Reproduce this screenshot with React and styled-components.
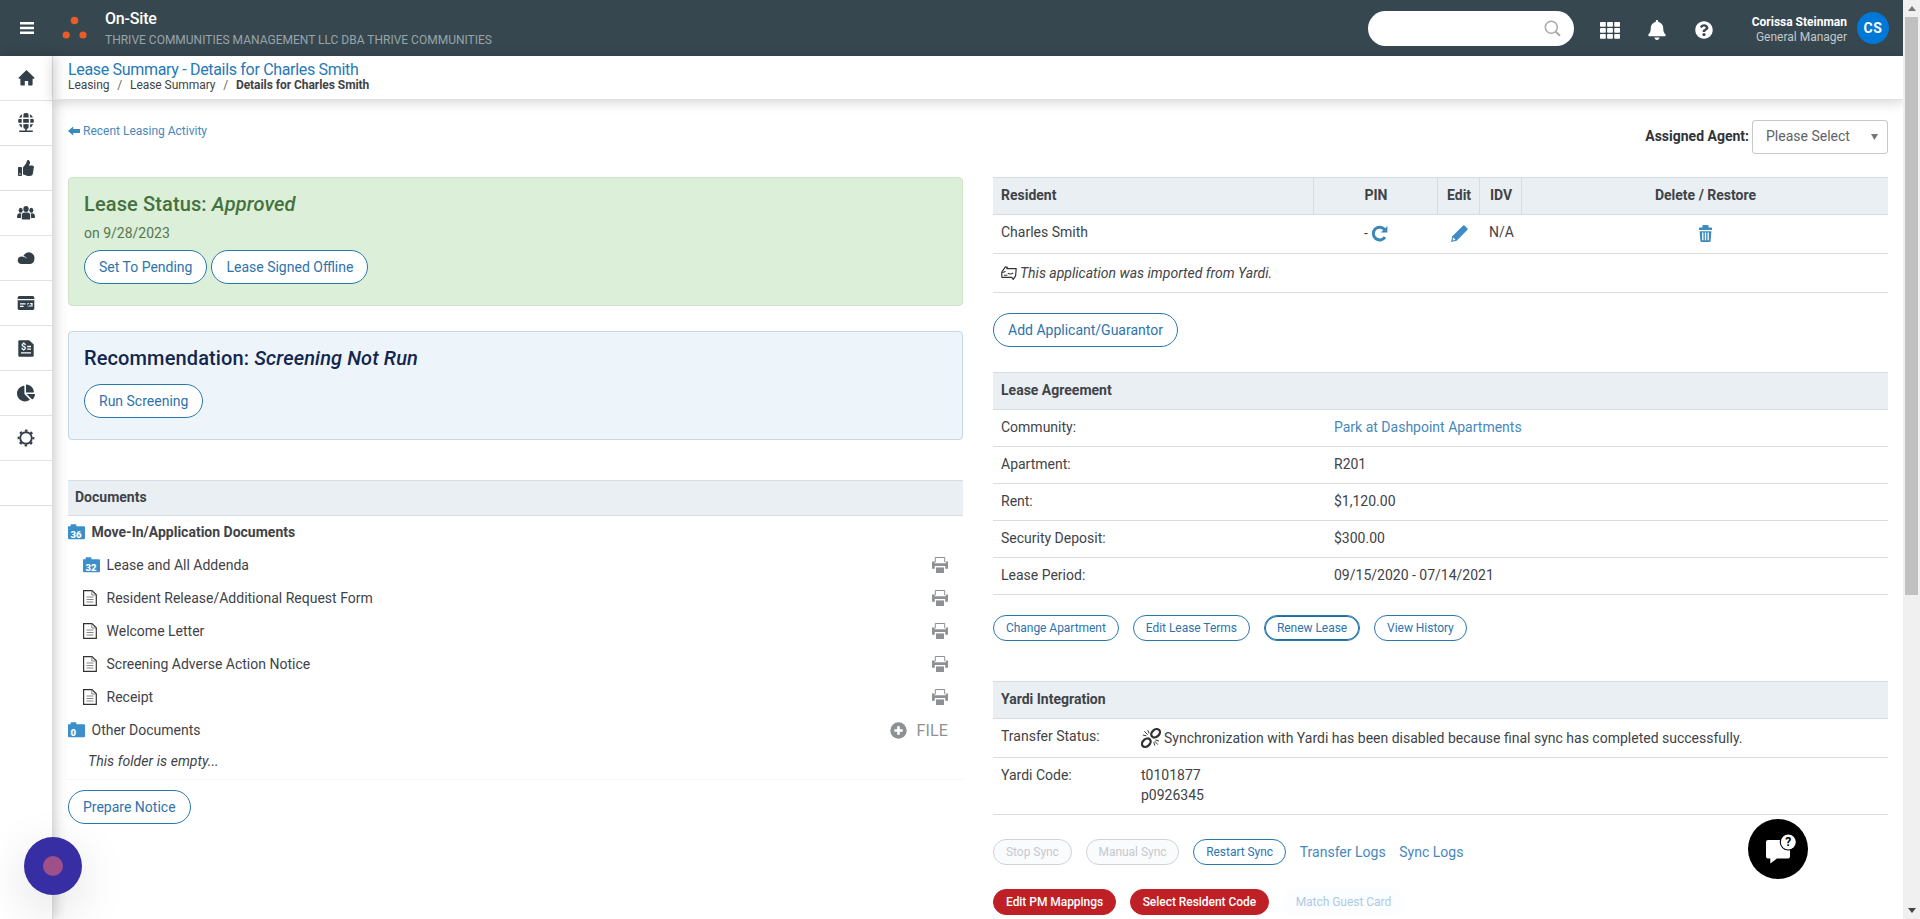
import React from "react";
import styled, { createGlobalStyle, css } from "styled-components";
import { FaThumbsUp, FaChartPie, FaBell, FaQuestionCircle } from "react-icons/fa";

const GlobalStyle = createGlobalStyle`
  *, *::before, *::after { box-sizing: border-box; }
  html, body { margin: 0; height: 100%; overflow: hidden; background: #fff; }
  body { font: 14px/20px Roboto, "Liberation Sans", sans-serif; color: #3f4347; }
  svg { display: block; flex: none; }
`;

const Page = styled.div`
  display: flex;
  height: 919px;
  width: 1920px;
  overflow: hidden;
`;
const AppColumn = styled.div`
  flex: 1;
  min-width: 0;
  display: flex;
  flex-direction: column;
`;

/* Header */
const Header = styled.header`
  height: 56px;
  flex: none;
  background: #37474f;
  color: #fff;
  display: flex;
  align-items: center;
  padding: 0 14px 0 20px;
`;
const Brand = styled.div`
  margin-left: 14px;
  padding-top: 2px;
  flex: 1;
`;
const BrandName = styled.div`
  font-size: 16px;
  line-height: 21px;
  font-weight: 500;
  letter-spacing: -0.2px;
`;
const BrandOrg = styled.div`
  font-size: 12px;
  line-height: 20px;
  padding-top: 1px;
  color: #98a4aa;
`;
const LogoSlot = styled.div`
  margin-left: 28px;
`;
const SearchBox = styled.div`
  width: 206px;
  height: 35px;
  border-radius: 18px;
  background: #fff;
  display: flex;
  align-items: center;
  justify-content: flex-end;
  padding-right: 13px;
`;
const HeaderIcons = styled.div`
  display: flex;
  align-items: center;
  margin: 4px 0 0 26px;
  width: 113px;
`;
const IconSlot = styled.div`
  margin-left: ${(p) => p.$left || 0}px;
`;
const User = styled.div`
  width: 134px;
  text-align: right;
  font-size: 12px;
  line-height: 15px;
  padding-top: 3px;
`;
const UserName = styled.div`
  font-weight: 700;
`;
const UserRole = styled.div`
  color: #c3c9cc;
`;
const Avatar = styled.div`
  width: 32px;
  height: 32px;
  margin-left: 10px;
  border-radius: 50%;
  background: #0078d7;
  font-weight: 700;
  letter-spacing: 0.6px;
  display: flex;
  align-items: center;
  justify-content: center;
`;

/* Frame */
const Body = styled.div`
  flex: 1;
  display: flex;
  min-height: 0;
`;
const Sidebar = styled.nav`
  width: 53px;
  flex: none;
  border-right: 1px solid #dcdcdc;
  box-shadow: 2px 0 12px rgba(0, 0, 0, 0.2);
  background: #fff;
  color: #333f48;
`;
const NavItem = styled.div`
  height: 45px;
  border-bottom: 1px solid #e2e2e2;
  display: flex;
  align-items: center;
  justify-content: center;
`;
const Main = styled.main`
  flex: 1;
  min-width: 0;
  display: flex;
  flex-direction: column;
`;
const TitleBar = styled.div`
  height: 44px;
  flex: none;
  padding: 4px 15px 0;
  border-bottom: 1px solid #e2e2e2;
  box-shadow: 0 2px 12px rgba(0, 0, 0, 0.18);
`;
const PageTitle = styled.div`
  font-size: 16px;
  line-height: 19px;
  letter-spacing: -0.32px;
  color: #2579b8;
`;
const Crumbs = styled.div`
  display: flex;
  gap: 7.8px;
  font-size: 12px;
  line-height: 12px;
  letter-spacing: -0.05px;
`;
const Crumb = styled.span`
  font-weight: ${(p) => (p.$current ? 700 : 400)};
`;
const CrumbSlash = styled.span`
  color: #666;
`;

const Toolbar = styled.div`
  height: 77px;
  flex: none;
  padding: 20px 15px 0;
  display: flex;
  justify-content: space-between;
  align-items: flex-start;
`;
const BackLink = styled.a`
  display: flex;
  align-items: center;
  gap: 3px;
  font-size: 12px;
  line-height: 22px;
  color: #4788bc;
`;
const AgentPicker = styled.div`
  display: flex;
  gap: 3px;
  font-weight: 700;
  line-height: 32px;
  color: #30343a;
`;
const Select = styled.div`
  width: 136px;
  height: 34px;
  border: 1px solid #c6c8ca;
  border-radius: 3px;
  padding: 0 9px 0 13px;
  font-weight: 400;
  line-height: 30px;
  color: #606468;
  display: flex;
  justify-content: space-between;
`;
const SelectCaret = styled.div`
  padding-top: 13px;
`;
const Columns = styled.div`
  display: grid;
  grid-template-columns: 895px 895px;
  gap: 30px;
  padding: 0 15px;
`;

/* Buttons */
const Button = styled.button`
  height: 34px;
  font: 400 14px/20px Roboto, "Liberation Sans", sans-serif;
  padding: 0 14px;
  border: 1px solid #2878ae;
  border-radius: 17px;
  background: #fff;
  color: #2e73ad;
  white-space: nowrap;
  ${(p) =>
    p.$small &&
    css`
      height: 26px;
      font-size: 12px;
      padding: 0 12px;
      letter-spacing: -0.04px;
    `}
  ${(p) => p.$focus && css`box-shadow: inset 0 0 0 1px #1d6ea8;`}
  ${(p) =>
    p.$disabled &&
    css`
      border-color: #d0d3d6;
      background: #fafbfd;
      color: #c5c9ce;
    `}
  ${(p) =>
    p.$danger &&
    css`
      border-color: #bf2026;
      background: #bf2026;
      color: #fff;
      font-weight: 500;
    `}
  ${(p) =>
    p.$ghost &&
    css`
      border-color: #fcfdff;
      background: #fcfdff;
      color: #abcbe5;
    `}
`;
const ButtonRow = styled.div`
  display: flex;
  align-items: center;
  gap: ${(p) => p.$gap || 4}px;
  margin-top: ${(p) => p.$top || 0}px;
`;
const Link = styled.a`
  color: #4788bc;
`;

/* Alerts */
const Alert = styled.section`
  border: 1px solid ${(p) => (p.$green ? "#cfe5c8" : "#c6d8e6")};
  background: ${(p) => (p.$green ? "#dcefd8" : "#edf5fb")};
  color: ${(p) => (p.$green ? "#45713f" : "#14264f")};
  border-radius: 4px;
  height: ${(p) => p.$h}px;
  margin-bottom: ${(p) => p.$gap}px;
  padding: 14px 15px 0;
`;
const AlertTitle = styled.h4`
  margin: 0;
  font-size: 20px;
  line-height: 24px;
  font-weight: 500;
  letter-spacing: 0.12px;
`;
const AlertNote = styled.div`
  margin-top: 7px;
  line-height: 20px;
  color: #57764f;
`;

/* Documents */
const DocHeader = styled.div`
  height: 36px;
  border: solid #d3dee6;
  border-width: 1px 0;
  background: #eaeff4;
  padding: 6px 7px;
  font-weight: 700;
`;
const DocRow = styled.div`
  height: 33px;
  display: flex;
  align-items: center;
  padding: 0 15px 1px ${(p) => (p.$nested ? 15 : 0)}px;
  font-weight: ${(p) => (p.$bold ? 700 : 400)};
`;
const DocIcon = styled.div`
  width: 23.5px;
`;
const DocName = styled.div`
  flex: 1;
`;
const AddFile = styled.div`
  display: flex;
  align-items: center;
  gap: 9px;
  font-size: 16px;
  letter-spacing: 0.15px;
  padding-top: 1px;
  color: #8e9193;
`;
const FolderEmpty = styled.div`
  height: 33px;
  padding: 4px 20px 0;
  font-style: italic;
  letter-spacing: 0.06px;
  border-bottom: 1px solid #f5f5f5;
`;

/* Tables */
const ResidentTable = styled.table`
  width: 895px;
  border-collapse: separate;
  border-spacing: 0;
  table-layout: fixed;
`;
const Th = styled.th`
  height: 38px;
  padding: 0 8px 3px;
  border: solid #d5dde2;
  border-width: 1px 0;
  background: #eaeff4;
  font-weight: 700;
  text-align: ${(p) => (p.$left ? "left" : "center")};
  & + & { border-left: 1px solid #d5dde2; padding-left: 9px; }
`;
const Td = styled.td`
  height: 39px;
  padding: 0 8px ${(p) => p.$pb ?? 5}px;
  border-bottom: 1px solid #dadddf;
  text-align: ${(p) => (p.$left ? "left" : "center")};
  font-style: ${(p) => (p.$italic ? "italic" : "normal")};
  & + & { padding-left: 10px; }
`;
const Inline = styled.div`
  display: flex;
  align-items: center;
  justify-content: ${(p) => (p.$left ? "flex-start" : "center")};
  gap: ${(p) => p.$gap ?? 3}px;
  padding-top: ${(p) => p.$pt || 0}px;
`;
const Panel = styled.section`
  margin-top: ${(p) => p.$top}px;
`;
const PanelHeader = styled.div`
  height: 38px;
  border: solid #d5dde2;
  border-width: 1px 0;
  background: #eaeff4;
  font-weight: 700;
  padding: 7px 8px;
`;
const Field = styled.div`
  display: grid;
  grid-template-columns: ${(p) => p.$label || 333}px 1fr;
  min-height: ${(p) => p.$min || 37}px;
  padding: 7px 8px 9px;
  border-bottom: 1px solid #dadddf;
`;

/* Overlays */
const RecordBubble = styled.div`
  position: absolute;
  left: 24px;
  top: 837px;
  width: 58px;
  height: 58px;
  border-radius: 50%;
  background: #372ea3;
  box-shadow: 0 14px 50px rgba(0, 0, 0, 0.13);
  display: flex;
  align-items: center;
  justify-content: center;
`;
const RecordDot = styled.div`
  width: 20px;
  height: 20px;
  border-radius: 50%;
  background: #9d5188;
`;
const ChatBubble = styled.div`
  position: absolute;
  left: 1748px;
  top: 819px;
  width: 60px;
  height: 60px;
  border-radius: 50%;
  background: #000;
`;

/* Scrollbar */
const ScrollTrack = styled.div`
  width: 17px;
  flex: none;
  background: #f0f0f0;
  display: flex;
  flex-direction: column;
  align-items: center;
  justify-content: space-between;
`;
const ScrollThumb = styled.div`
  width: 13px;
  height: 578px;
  background: #c0c0c0;
`;
const ScrollArrow = styled.div`
  height: 17px;
  display: flex;
  align-items: center;
`;
const Grow = styled.div`
  flex: 1;
`;

/* Icons */
const HomeIcon = () => (
  <svg width="17" height="16" viewBox="0 0 17 16" fill="currentColor">
    <path d="M8.5 0 L16.7 8 L15.8 8.8 H14.6 V14.6 Q14.6 15.6 13.6 15.6 H10.2 V11 H6.8 V15.6 H3.4 Q2.4 15.6 2.4 14.6 V8.8 H1.2 L.3 8 Z" />
  </svg>
);
const GlobeIcon = () => (
  <svg width="18" height="20" viewBox="0 0 18 20">
    <circle cx="9" cy="8" r="7.9" fill="currentColor" />
    <path d="M0 5.3H18M0 10.4H18M6 0Q4.8 8 6 16.5M12 0Q13.2 8 12 16.5" stroke="#fff" strokeWidth="1.5" fill="none" />
    <path d="M9 11v7M2.2 18.2h13.6" stroke="currentColor" strokeWidth="1.6" />
  </svg>
);
const PeopleIcon = () => (
  <svg width="18" height="14" viewBox="0 0 18 14" fill="currentColor">
    <ellipse cx="9" cy="3" rx="2.7" ry="3" />
    <path d="M4.8 13.4V9.6Q4.8 6.6 7.6 6.5H10.4Q13.2 6.6 13.2 9.6V13.4Z" />
    <ellipse cx="3.7" cy="4.3" rx="2" ry="2.5" />
    <ellipse cx="14.3" cy="4.3" rx="2" ry="2.5" />
    <path d="M.1 12V9.8Q.2 7.3 2.4 7.2L4.4 7.4Q3.8 8.4 3.9 12ZM17.9 12V9.8Q17.8 7.3 15.6 7.2L13.6 7.4Q14.2 8.4 14.1 12Z" />
  </svg>
);
const CloudIcon = () => (
  <svg width="18" height="12" viewBox="0 0 18 12" fill="currentColor">
    <circle cx="11.8" cy="6" r="5.7" />
    <circle cx="4.6" cy="8.2" r="3.8" />
    <path d="M4.6 12V7L12 1Q17 3 17.2 8Q16.4 12 12.6 12Z" />
    <path d="M6 4.4Q8.2 4.5 9.5 6" stroke="#fff" strokeWidth=".8" fill="none" />
  </svg>
);
const CardIcon = () => (
  <svg width="18" height="14" viewBox="0 0 18 14">
    <rect x=".7" y="0" width="16.6" height="14" rx="1.6" fill="currentColor" />
    <path d="M.7 3.7H17.3M3 7.8H8.5M3 10.3H6.6M11 7.6H15V10H11Z" stroke="#fff" strokeWidth="1.2" fill="none" />
    <path d="M10.5 10.2l2.4-3" stroke="currentColor" strokeWidth="1.4" />
  </svg>
);
const InvoiceIcon = () => (
  <svg width="16" height="17" viewBox="0 0 16 17">
    <path d="M1.6.3H11.2L15.7 4.6V15.4Q15.7 16.7 14.4 16.7H1.6Q.3 16.7.3 15.4V1.6Q.3.3 1.6.3Z" fill="currentColor" />
    <path d="M9.2 6.5H13M9.2 9.2H13M3 12.9H13" stroke="#fff" strokeWidth="1.3" />
    <text x="3" y="10.2" fontSize="9" fontWeight="700" fill="#fff">$</text>
  </svg>
);
const GearIcon = () => (
  <svg width="18" height="18" viewBox="0 0 18 18" stroke="currentColor" fill="none">
    <circle cx="9" cy="9" r="5.8" strokeWidth="1.9" />
    <circle cx="9" cy="9" r="7.4" strokeWidth="2" strokeDasharray="2.6 3.212" strokeDashoffset="1.3" />
  </svg>
);
const MenuIcon = () => (
  <svg width="14" height="12" viewBox="0 0 14 12" fill="#fff">
    <path d="M0 0h14v2.6H0zM0 4.8h14v2.5H0zM0 9.4h14V12H0z" />
  </svg>
);
const Logo = () => (
  <svg width="29" height="26" viewBox="0 0 29 26" fill="#e85c2c">
    <circle cx="12.5" cy="5.5" r="3.8" />
    <circle cx="4.2" cy="20" r="3.6" />
    <circle cx="21" cy="20" r="3.6" />
  </svg>
);
const SearchIcon = () => (
  <svg width="17" height="17" viewBox="0 0 17 17" fill="none" stroke="#aaa" strokeWidth="1.5">
    <circle cx="7.3" cy="7.3" r="6" />
    <path d="M11.7 11.7l4.3 4" strokeWidth="2" />
  </svg>
);
const GridIcon = () => (
  <svg width="20" height="17" viewBox="0 0 20 17" fill="#fff">
    {[0, 6, 12].map((y) =>
      [0, 7.1, 14.2].map((x) => <rect key={`${x}-${y}`} x={x} y={y} width="5.8" height="4.8" rx=".8" />)
    )}
  </svg>
);
const ArrowLeft = () => (
  <svg width="12" height="10" viewBox="0 0 12 10" fill="#3a89bb">
    <path d="M0 5L5.2.5V3H12V7H5.2V9.5Z" />
  </svg>
);
const FolderIcon = ({ count }) => (
  <svg width="17" height="16" viewBox="0 0 17 16">
    <path d="M0 2.2H2.6V1Q2.6.3 3.4.3H7.6Q8.4.3 8.4 1V2.2H16Q17 2.2 17 3.2V14.3Q17 15.3 16 15.3H1Q0 15.3 0 14.3Z" fill="#3c8fca" />
    <text x="2.6" y="14" fontSize="9.5" fontWeight="900" fill="#fff">{count}</text>
  </svg>
);
const DocFileIcon = () => (
  <svg width="14" height="16" viewBox="0 0 14 16" fill="none" stroke="#333" strokeWidth="1.2">
    <path d="M.6.6H9L13.3 4.8V15.4H.6Z" />
    <path d="M8.8.6V5H13.2M3.5 7H10.5M3.5 9.5H10.5M3.5 12H10.5" strokeWidth=".9" stroke="#777" />
  </svg>
);
const PrinterIcon = () => (
  <svg width="16" height="16" viewBox="0 0 16 16" fill="#8e9193">
    <path d="M3.3 5.2V.5H12.7V5.2" fill="#fff" stroke="#8e9193" />
    <path d="M0 5.6H2.2V6.2H13.8V4.5H16V11.8H13.2V9H2.8V11.8H0Z" />
    <path d="M4 10.4H12V16H4Z" />
    <path d="M0 4.5H2.8V6H0Z" />
  </svg>
);
const PlusCircle = () => (
  <svg width="17" height="17" viewBox="0 0 17 17">
    <circle cx="8.5" cy="8.5" r="8.2" fill="#8e9193" />
    <path d="M8.5 4.3V12.7M4.3 8.5H12.7" stroke="#fff" strokeWidth="2.6" />
  </svg>
);
const RefreshIcon = () => (
  <svg width="17" height="17" viewBox="0 0 17 17">
    <path d="M13.6 4.4A6.4 6.4 0 1 0 14 12.2" fill="none" stroke="#3c87ba" strokeWidth="3" />
    <path d="M16.4 1V7.6H9.8Z" fill="#3c87ba" />
  </svg>
);
const PencilIcon = () => (
  <svg width="17" height="17" viewBox="0 0 17 17" fill="#3f8bc9">
    <path d="M0 17L1.3 11.3L12.2.5Q13 0 13.6.5L16.5 3.4Q17 4 16.5 4.7L5.7 15.7Z" />
    <path d="M1.5 15.5L2.3 12.5L4.5 14.7Z" fill="#fff" />
  </svg>
);
const TrashIcon = () => (
  <svg width="13" height="17" viewBox="0 0 13 17" fill="#3f8bbf">
    <path d="M0 5V3.2Q0 2.5.8 2.5H3.4V1Q3.4 0 4.4 0H8.6Q9.6 0 9.6 1V2.5H12.2Q13 2.5 13 3.2V5ZM.6 6.2H12.4L11.6 16Q11.5 17 10.6 17H2.4Q1.5 17 1.4 16Z" />
    <path d="M3.8 7.5V15.2M6.5 7.5V15.2M9.2 7.5V15.2" stroke="#fff" strokeWidth="1.3" />
  </svg>
);
const ImportedIcon = () => (
  <svg width="16" height="14" viewBox="0 0 16 14" fill="none" stroke="#333" strokeWidth="1.2" strokeLinejoin="round">
    <path d="M.8 11.6V6L4.4.9L6.3 1.4L5.8 2.7H15.2L14.6 9.8L12.2 13.3L10.8 11.4H.8" />
    <path d="M1.2 6.6L4.6 5.4M3 9.2H6.4M6.8 7.2Q9.6 8.8 12.2 7" strokeWidth="1.1" />
  </svg>
);
const UnlinkIcon = () => (
  <svg width="20" height="20" viewBox="0 0 20 20" fill="none" stroke="#303234" strokeWidth="2.3">
    <ellipse cx="14.6" cy="5.3" rx="4.8" ry="3.6" transform="rotate(-42 14.6 5.3)" />
    <ellipse cx="5.3" cy="14.7" rx="4.8" ry="3.6" transform="rotate(-42 5.3 14.7)" />
    <path d="M6.8 2.2L8.2 5.4M3.4 3.2L6.6 6.6M1.8 7L5.4 7.8M12.8 14.2L13.8 17.6M13.8 13.2L16.8 16.6M14.4 12L18 13" strokeWidth="1" />
  </svg>
);
const Caret = ({ up, w = 8, h = 5, color = "#777" }) => (
  <svg width={w} height={h} viewBox="0 0 8 5" fill={color} preserveAspectRatio="none">
    <path d={up ? "M0 5L4 0L8 5Z" : "M0 0H8L4 5Z"} />
  </svg>
);
const ChatIcon = () => (
  <svg width="60" height="60" viewBox="0 0 60 60">
    <path d="M20 21H40Q42 21 42 23V37.5Q42 39.5 40 39.5H29L22.3 44.6V39.5H20Q18 39.5 18 37.5V23Q18 21 20 21Z" fill="#fff" />
    <circle cx="40.3" cy="23" r="8.6" fill="#000" />
    <circle cx="40.3" cy="23" r="7.5" fill="#fff" />
    <text x="40.3" y="27.2" textAnchor="middle" fontSize="12" fontWeight="700" fill="#000">?</text>
  </svg>
);

const navIcons = [
  <HomeIcon />, <GlobeIcon />, <FaThumbsUp size={16} />, <PeopleIcon />, <CloudIcon />,
  <CardIcon />, <InvoiceIcon />, <FaChartPie size={18} />, <GearIcon />, null,
];
const documents = ["Resident Release/Additional Request Form", "Welcome Letter", "Screening Adverse Action Notice", "Receipt"];
const leaseFields = [
  ["Community:", <Link>Park at Dashpoint Apartments</Link>],
  ["Apartment:", "R201"],
  ["Rent:", "$1,120.00"],
  ["Security Deposit:", "$300.00"],
  ["Lease Period:", "09/15/2020 - 07/14/2021"],
];

export default function App() {
  return (
    <Page>
      <GlobalStyle />
      <AppColumn>
        <Header>
          <MenuIcon />
          <LogoSlot><Logo /></LogoSlot>
          <Brand>
            <BrandName>On-Site</BrandName>
            <BrandOrg>THRIVE COMMUNITIES MANAGEMENT LLC DBA THRIVE COMMUNITIES</BrandOrg>
          </Brand>
          <SearchBox><SearchIcon /></SearchBox>
          <HeaderIcons>
            <GridIcon />
            <IconSlot $left={27}><FaBell size={20} /></IconSlot>
            <IconSlot $left={28}><FaQuestionCircle size={18} /></IconSlot>
          </HeaderIcons>
          <User>
            <UserName>Corissa Steinman</UserName>
            <UserRole>General Manager</UserRole>
          </User>
          <Avatar>CS</Avatar>
        </Header>
        <Body>
          <Sidebar>
            {navIcons.map((icon, i) => <NavItem key={i}>{icon}</NavItem>)}
          </Sidebar>
          <Main>
            <TitleBar>
              <PageTitle>Lease Summary - Details for Charles Smith</PageTitle>
              <Crumbs>
                <Crumb>Leasing</Crumb><CrumbSlash>/</CrumbSlash>
                <Crumb>Lease Summary</Crumb><CrumbSlash>/</CrumbSlash>
                <Crumb $current>Details for Charles Smith</Crumb>
              </Crumbs>
            </TitleBar>
            <Toolbar>
              <BackLink><ArrowLeft />Recent Leasing Activity</BackLink>
              <AgentPicker>
                Assigned Agent:
                <Select>Please Select<SelectCaret><Caret w={7} h={6} /></SelectCaret></Select>
              </AgentPicker>
            </Toolbar>
            <Columns>
              <div>
                <Alert $green $h={129} $gap={25}>
                  <AlertTitle>Lease Status: <em>Approved</em></AlertTitle>
                  <AlertNote>on 9/28/2023</AlertNote>
                  <ButtonRow $top={7}>
                    <Button>Set To Pending</Button>
                    <Button>Lease Signed Offline</Button>
                  </ButtonRow>
                </Alert>
                <Alert $h={109} $gap={40}>
                  <AlertTitle>Recommendation: <em>Screening Not Run</em></AlertTitle>
                  <ButtonRow $top={14}><Button>Run Screening</Button></ButtonRow>
                </Alert>
                <DocHeader>Documents</DocHeader>
                <DocRow $bold><DocIcon><FolderIcon count="36" /></DocIcon><DocName>Move-In/Application Documents</DocName></DocRow>
                <DocRow $nested><DocIcon><FolderIcon count="32" /></DocIcon><DocName>Lease and All Addenda</DocName><PrinterIcon /></DocRow>
                {documents.map((name) => (
                  <DocRow $nested key={name}>
                    <DocIcon><DocFileIcon /></DocIcon><DocName>{name}</DocName><PrinterIcon />
                  </DocRow>
                ))}
                <DocRow>
                  <DocIcon><FolderIcon count="0" /></DocIcon><DocName>Other Documents</DocName>
                  <AddFile><PlusCircle />FILE</AddFile>
                </DocRow>
                <FolderEmpty>This folder is empty...</FolderEmpty>
                <ButtonRow $top={10}><Button>Prepare Notice</Button></ButtonRow>
              </div>
              <div>
                <ResidentTable>
                  <colgroup>
                    <col width="320" /><col width="124" /><col width="42" /><col width="42" /><col width="367" />
                  </colgroup>
                  <thead>
                    <tr><Th $left>Resident</Th><Th>PIN</Th><Th>Edit</Th><Th>IDV</Th><Th>Delete / Restore</Th></tr>
                  </thead>
                  <tbody>
                    <tr>
                      <Td $left>Charles Smith</Td>
                      <Td $pb={2}><Inline>-<RefreshIcon /></Inline></Td>
                      <Td $pb={2}><Inline><PencilIcon /></Inline></Td>
                      <Td>N/A</Td>
                      <Td $pb={2}><Inline><TrashIcon /></Inline></Td>
                    </tr>
                    <tr>
                      <Td colSpan={5} $left $italic $pb={0}><Inline $left><ImportedIcon />This application was imported from Yardi.</Inline></Td>
                    </tr>
                  </tbody>
                </ResidentTable>
                <ButtonRow $top={20}><Button>Add Applicant/Guarantor</Button></ButtonRow>
                <Panel $top={25}>
                  <PanelHeader>Lease Agreement</PanelHeader>
                  {leaseFields.map(([label, value]) => (
                    <Field key={label}><span>{label}</span><span>{value}</span></Field>
                  ))}
                </Panel>
                <ButtonRow $top={20} $gap={14}>
                  <Button $small>Change Apartment</Button>
                  <Button $small>Edit Lease Terms</Button>
                  <Button $small $focus>Renew Lease</Button>
                  <Button $small>View History</Button>
                </ButtonRow>
                <Panel $top={40}>
                  <PanelHeader>Yardi Integration</PanelHeader>
                  <Field $label={140} $min={39}>
                    <span>Transfer Status:</span>
                    <Inline $left $pt={2}><UnlinkIcon />Synchronization with Yardi has been disabled because final sync has completed successfully.</Inline>
                  </Field>
                  <Field $label={140}>
                    <span>Yardi Code:</span>
                    <span>t0101877<br />p0926345</span>
                  </Field>
                </Panel>
                <ButtonRow $top={24} $gap={13.7}>
                  <Button $small $disabled>Stop Sync</Button>
                  <Button $small $disabled>Manual Sync</Button>
                  <Button $small>Restart Sync</Button>
                  <Link>Transfer Logs</Link>
                  <Link>Sync Logs</Link>
                </ButtonRow>
                <ButtonRow $top={24} $gap={13.5}>
                  <Button $small $danger>Edit PM Mappings</Button>
                  <Button $small $danger>Select Resident Code</Button>
                  <Button $small $ghost>Match Guest Card</Button>
                </ButtonRow>
              </div>
            </Columns>
          </Main>
        </Body>
      </AppColumn>
      <ScrollTrack>
        <ScrollArrow><Caret up /></ScrollArrow>
        <ScrollThumb />
        <Grow />
        <ScrollArrow><Caret color="#444" /></ScrollArrow>
      </ScrollTrack>
      <RecordBubble><RecordDot /></RecordBubble>
      <ChatBubble><ChatIcon /></ChatBubble>
    </Page>
  );
}
